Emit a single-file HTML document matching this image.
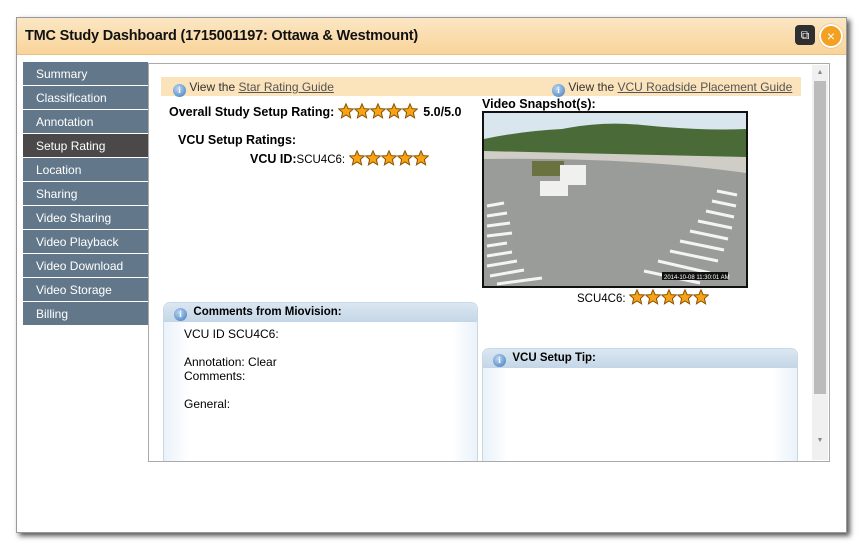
<!DOCTYPE html>
<html><head><style>
*{margin:0;padding:0;box-sizing:border-box}
body{width:864px;height:550px;background:#fff;position:relative;overflow:hidden;font-family:"Liberation Sans",sans-serif}
.win{position:absolute;left:16px;top:17px;width:831px;height:516px;background:#fff;border:1px solid #999;box-shadow:3px 3px 5px #555}
.title{position:absolute;left:0;top:0;width:829px;height:37px;background:linear-gradient(#fbe6c4,#f9d49a);border-bottom:1px solid #e8c080;font-weight:bold;font-size:14.5px;color:#111;padding:10px 0 0 8px;letter-spacing:-0.2px}
.nav{position:absolute;left:23px;top:62px;width:125px}
.nav div{height:23px;margin-bottom:1px;background:#62788a;color:#fff;font-size:12px;padding:5px 0 0 13px}
.nav div.a{background:#4a4848}
.panel{position:absolute;left:148px;top:63px;width:682px;height:399px;border:1px solid #aaa;background:#fff;overflow:hidden}
.sb{position:absolute;right:1px;top:1px;width:16px;height:395px;background:#f0f0f0}
.thumb{position:absolute;left:2px;top:16px;width:12px;height:313px;background:#bbb}
.ab{position:absolute;color:#888;width:16px;text-align:center;font-size:7px}
.info{display:inline-block;width:13px;height:13px;border-radius:50%;background:radial-gradient(circle at 40% 35%,#bcd6f0,#3a78c0);color:#fff;font-size:9px;font-weight:bold;text-align:center;line-height:13px;vertical-align:-2px;font-family:"Liberation Serif",serif}
a{color:#555;text-decoration:underline}
.abs{position:absolute}
.box{position:absolute;border:1px solid #c8d8e8;border-radius:7px 7px 0 0;background:linear-gradient(90deg,#eaf2fa,#fff 8%,#fff 92%,#eaf2fa)}
.bh{height:19px;background:linear-gradient(#dbe7f2,#c4d6e6);border-radius:7px 7px 0 0;font-weight:bold;font-size:11.5px;padding:3px 0 0 10px}
.st{display:inline-block;vertical-align:-3px}
</style></head><body>
<svg width="0" height="0" style="position:absolute"><defs><symbol id="s" viewBox="0 0 16 16"><polygon points="8,0.8 10.1,5.6 15.3,6 11.4,9.5 12.6,14.8 8,12 3.4,14.8 4.6,9.5 0.7,6 5.9,5.6" fill="#f6a416" stroke="#8a5200" stroke-width="1"/></symbol></defs></svg>
<div class="win">
<div class="title">TMC Study Dashboard (1715001197: Ottawa &amp; Westmount)</div>
<div class="abs" style="left:778px;top:7px;width:20px;height:20px;background:#2f2f2f;border-radius:4px;color:#fff;font-size:12px;text-align:center;line-height:20px">⧉</div>
<div class="abs" style="left:802px;top:6px;width:24px;height:24px;border-radius:50%;background:#f4a020;border:2px solid #fff;box-shadow:0 0 1px #c07000;color:#fff;font-size:14px;text-align:center;line-height:20px">×</div>
</div>
<div class="nav"><div>Summary</div><div>Classification</div><div>Annotation</div><div class="a">Setup Rating</div><div>Location</div><div>Sharing</div><div>Video Sharing</div><div>Video Playback</div><div>Video Download</div><div>Video Storage</div><div>Billing</div></div>
<div class="panel">
<div class="abs" style="left:12px;top:13px;width:640px;height:19px;background:#fbe3bc;font-size:12px;color:#333;padding:3px 0 0 12px"><span class="info">i</span> View the <a>Star Rating Guide</a><span style="position:absolute;left:391px"><span class="info">i</span> View the <a>VCU Roadside Placement Guide</a></span></div>
<div class="abs" style="left:20px;top:39px;font-size:12.5px;font-weight:bold;white-space:nowrap">Overall Study Setup Rating: <svg class="st" width="82" height="16"><use href="#s" x="0" width="16" height="16"/><use href="#s" x="16" width="16" height="16"/><use href="#s" x="32" width="16" height="16"/><use href="#s" x="48" width="16" height="16"/><use href="#s" x="64" width="16" height="16"/></svg> 5.0/5.0</div>
<div class="abs" style="left:29px;top:69px;font-size:12.5px;font-weight:bold">VCU Setup Ratings:</div>
<div class="abs" style="left:101px;top:86px;font-size:12.5px;font-weight:bold;white-space:nowrap">VCU ID:<span style="font-weight:normal;font-size:11.5px">SCU4C6:</span> <svg class="st" width="82" height="16"><use href="#s" x="0" width="16" height="16"/><use href="#s" x="16" width="16" height="16"/><use href="#s" x="32" width="16" height="16"/><use href="#s" x="48" width="16" height="16"/><use href="#s" x="64" width="16" height="16"/></svg></div>
<div class="abs" style="left:333px;top:33px;font-size:12.5px;font-weight:bold">Video Snapshot(s):</div>
<svg class="abs" style="left:333px;top:47px" width="266" height="177">
<rect width="266" height="177" fill="#111"/>
<rect x="2" y="2" width="262" height="173" fill="#9a9c9a"/>
<rect x="2" y="2" width="262" height="30" fill="#d9e6ee"/>
<path d="M2 28 Q40 20 80 18 Q120 10 160 14 Q220 20 264 18 L264 50 L2 42Z" fill="#4a6a38"/>
<path d="M2 40 L264 46 L264 62 Q150 46 2 48Z" fill="#cfcdc6"/>
<g stroke="#f4f4f4" stroke-width="3">
<line x1="5" y1="135" x2="25" y2="132"/><line x1="5" y1="145" x2="30" y2="141"/><line x1="5" y1="155" x2="35" y2="150"/><line x1="8" y1="165" x2="42" y2="159"/><line x1="15" y1="173" x2="60" y2="167"/>
<line x1="235" y1="80" x2="255" y2="84"/><line x1="230" y1="90" x2="254" y2="95"/><line x1="224" y1="100" x2="252" y2="106"/><line x1="216" y1="110" x2="250" y2="117"/><line x1="208" y1="120" x2="246" y2="128"/><line x1="198" y1="130" x2="242" y2="139"/><line x1="188" y1="140" x2="236" y2="150"/><line x1="176" y1="150" x2="228" y2="162"/><line x1="162" y1="160" x2="218" y2="172"/>
<line x1="5" y1="95" x2="22" y2="92"/><line x1="5" y1="105" x2="25" y2="102"/><line x1="5" y1="115" x2="28" y2="112"/><line x1="5" y1="125" x2="30" y2="122"/>
</g>
<rect x="50" y="50" width="32" height="15" fill="#6a7240"/><rect x="78" y="54" width="26" height="20" fill="#f0f0ee"/>
<rect x="58" y="70" width="28" height="15" fill="#f0f0ee"/>
<rect x="180" y="161" width="66" height="8" fill="#111"/><text x="182" y="168" font-size="6" fill="#fff" font-family="Liberation Sans">2014-10-08 11:30:01 AM</text>
</svg>
<div class="abs" style="left:428px;top:225px;font-size:11.5px;white-space:nowrap">SCU4C6: <svg class="st" width="82" height="16"><use href="#s" x="0" width="16" height="16"/><use href="#s" x="16" width="16" height="16"/><use href="#s" x="32" width="16" height="16"/><use href="#s" x="48" width="16" height="16"/><use href="#s" x="64" width="16" height="16"/></svg></div>
<div class="box" style="left:14px;top:238px;width:315px;height:170px"><div class="bh"><span class="info">i</span> &nbsp;Comments from Miovision:</div>
<div style="font-size:12px;padding:5px 0 0 20px;line-height:14px">VCU ID SCU4C6:<br><br>Annotation: Clear<br>Comments:<br><br>General:</div></div>
<div class="box" style="left:333px;top:284px;width:316px;height:120px"><div class="bh"><span class="info">i</span> &nbsp;VCU Setup Tip:</div></div>
<div class="sb"><div class="ab" style="top:4px">▲</div><div class="thumb"></div><div class="ab" style="top:372px">▼</div></div>
</div>
</body></html>
